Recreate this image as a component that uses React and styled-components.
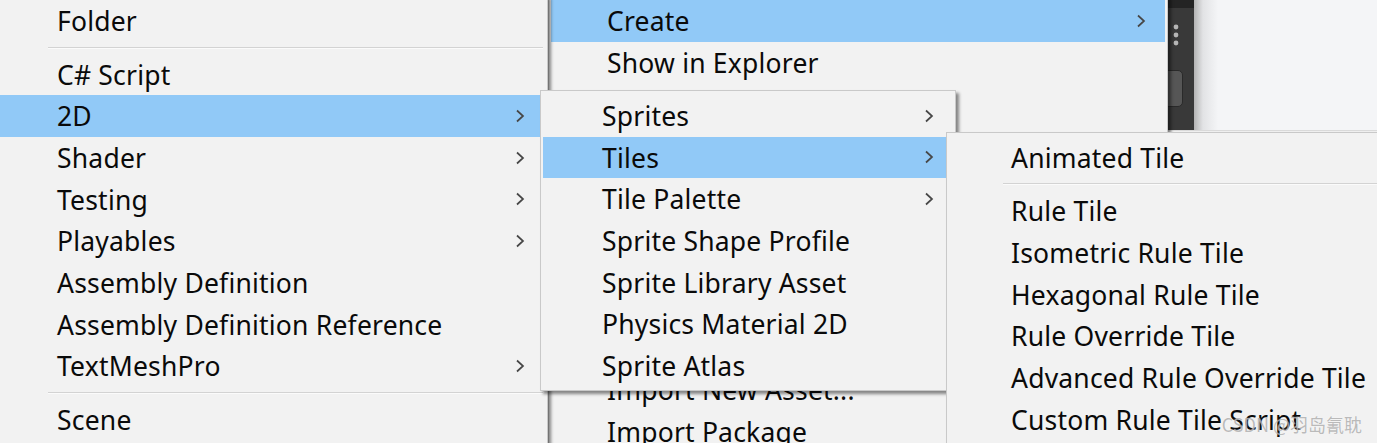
import React from 'react';
import styled, { createGlobalStyle } from 'styled-components';

const GlobalStyles = createGlobalStyle`
  *, *::before, *::after {
    box-sizing: border-box;
  }
  html, body {
    margin: 0;
    padding: 0;
  }
  body {
    background: #f0f0f0;
    font-family: "Noto Sans", "Open Sans", "Liberation Sans", sans-serif;
  }
`;

const Desktop = styled.div`
  position: relative;
  width: 1377px;
  height: 443px;
  overflow: hidden;
  background: #f0f0f0;
`;

// the Unity editor window behind the menus
const Backdrop = styled.div`
  display: flex;
  height: 131px;
  padding-left: 1150px;
  border-bottom: 1px solid #dadada;
`;

const Strip = styled.div`
  width: 44px;
  background: #393939;
  border-top: 8px solid #242424;
  display: flex;
  flex-direction: column;
  align-items: flex-start;
`;

const Dots = styled.svg`
  margin: 16px 0 0 22px;
`;

const Handle = styled.div`
  width: 20px;
  height: 37px;
  margin: 24px 0 0 13px;
  background: #565656;
  border: 1px solid #2a2a2a;
  border-radius: 5px;
`;

const Panel = styled.div`
  flex: 1;
  background: linear-gradient(to right, #b4b4b4 0, #e2e3e5 9px, #f4f5f7 24px);
`;

const Menu = styled.div`
  position: absolute;
  left: ${p => p.$left}px;
  top: ${p => p.$top}px;
  width: ${p => p.$width}px;
  z-index: ${p => p.$z};
  padding: 4px 2px 3px;
  background: #f2f2f2;
  border: 1px solid #c9c9c9;
  box-shadow: 3px 3px 3px rgba(0, 0, 0, 0.45);
`;

const Item = styled.div`
  display: flex;
  align-items: center;
  height: 41.67px;
  padding-left: ${p => p.$indent}px;
  background: ${p => (p.$active ? '#91c9f7' : 'transparent')};
  color: #0a0a0a;
  font-size: 26.5px;
  letter-spacing: 0.2px;
  white-space: nowrap;
`;

const Label = styled.span`
  line-height: 1;
  padding-top: 1px;
`;

// rows of the menu that lie hidden under the submenus
const Hidden = styled.div`
  height: ${p => p.$rows * 41.67 + p.$seps * 12}px;
`;

const ArrowIcon = styled.svg`
  margin-left: auto;
  margin-right: ${p => p.$gap}px;
  flex: none;
`;

const Separator = styled.div`
  height: 12px;
  padding-top: 5px;
  margin-left: ${p => p.$indent}px;
  margin-right: 2px;

  &::before {
    content: '';
    display: block;
    height: 1px;
    background: #d3d3d3;
    box-shadow: 0 1px 0 #fbfbfb;
  }
`;

const Watermark = styled.div`
  position: absolute;
  right: 15px;
  bottom: 6px;
  z-index: 10;
  font-family: "Noto Sans CJK SC", "Noto Sans", sans-serif;
  font-size: 18px;
  color: rgba(120, 120, 120, 0.5);
  text-shadow: 0 0 1px rgba(255, 255, 255, 0.9);
`;

function Arrow({ gap }) {
  return (
    <ArrowIcon $gap={gap} width="10" height="14" viewBox="0 0 10 14">
      <polyline
        points="2,1.5 8,7 2,12.5"
        fill="none"
        stroke="#474747"
        strokeWidth="1.7"
      />
    </ArrowIcon>
  );
}

function MenuList({ items, indent, sepIndent, gap }) {
  return items.map((it, i) => {
    if (it === '-') return <Separator key={i} $indent={sepIndent} />;
    if (it.hidden) return <Hidden key={i} $rows={it.rows} $seps={it.seps} />;
    const { label, sub, active } = typeof it === 'string' ? { label: it } : it;
    return (
      <Item key={i} $indent={indent} $active={active}>
        <Label>{label}</Label>
        {sub ? <Arrow gap={gap} /> : null}
      </Item>
    );
  });
}

const assetsMenu = [
  { label: 'Create', sub: true, active: true },
  'Show in Explorer',
  { hidden: true, rows: 6, seps: 3 },
  'Import New Asset...',
  'Import Package',
];

const createMenu = [
  'Folder',
  '-',
  'C# Script',
  { label: '2D', sub: true, active: true },
  { label: 'Shader', sub: true },
  { label: 'Testing', sub: true },
  { label: 'Playables', sub: true },
  'Assembly Definition',
  'Assembly Definition Reference',
  { label: 'TextMeshPro', sub: true },
  '-',
  'Scene',
];

const twoDMenu = [
  { label: 'Sprites', sub: true },
  { label: 'Tiles', sub: true, active: true },
  { label: 'Tile Palette', sub: true },
  'Sprite Shape Profile',
  'Sprite Library Asset',
  'Physics Material 2D',
  'Sprite Atlas',
];

const tilesMenu = [
  'Animated Tile',
  '-',
  'Rule Tile',
  'Isometric Rule Tile',
  'Hexagonal Rule Tile',
  'Rule Override Tile',
  'Advanced Rule Override Tile',
  'Custom Rule Tile Script',
];

export default function App() {
  return (
    <>
      <GlobalStyles />
      <Desktop>
        <Backdrop>
          <Strip>
            <Dots width="8" height="22" viewBox="0 0 8 22">
              <circle cx="4" cy="3" r="2.4" fill="#b5b5b5" />
              <circle cx="4" cy="11" r="2.4" fill="#b5b5b5" />
              <circle cx="4" cy="19" r="2.4" fill="#b5b5b5" />
            </Dots>
            <Handle />
          </Strip>
          <Panel />
        </Backdrop>

        <Menu $left={548} $top={-5} $width={620} $z={1}>
          <MenuList items={assetsMenu} indent={56} sepIndent={56} gap={19} />
        </Menu>

        <Menu $left={-3} $top={-5} $width={551} $z={2}>
          <MenuList items={createMenu} indent={57} sepIndent={48} gap={20} />
        </Menu>

        <Menu $left={540} $top={90} $width={416} $z={3}>
          <MenuList items={twoDMenu} indent={59} sepIndent={54} gap={19} />
        </Menu>

        <Menu $left={946} $top={131.5} $width={470} $z={4}>
          <MenuList items={tilesMenu} indent={62} sepIndent={54} gap={19} />
        </Menu>

        <Watermark>CSDN @羽岛氰耽</Watermark>
      </Desktop>
    </>
  );
}
